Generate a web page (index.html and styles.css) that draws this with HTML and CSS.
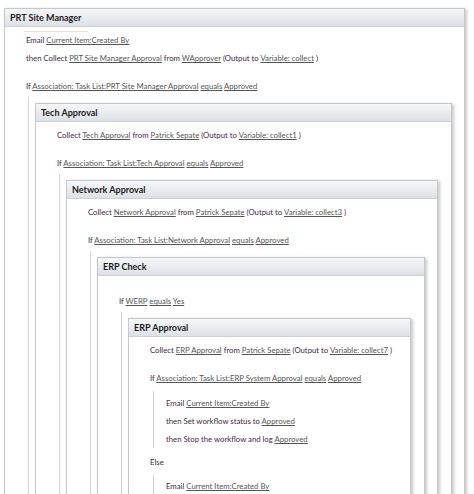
FILE: index.html
```html
<!DOCTYPE html>
<html>
<head>
<meta charset="utf-8">
<link rel="stylesheet" href="styles.css">
</head>
<body>
<div class="page">
  <div class="box">
    <div class="hdr">PRT Site Manager</div>
    <div class="body first">
      <div class="ln">Email <a>Current Item:Created By</a></div>
      <div class="ln">then Collect <a>PRT Site Manager Approval</a> from <a>WApprover</a> (Output to <a>Variable: collect</a> )</div>
      <div class="ln gap">If <a>Association: Task List:PRT Site Manager Approval</a> <a>equals</a> <a>Approved</a></div>
      <div class="branch">
        <div class="box">
          <div class="hdr">Tech Approval</div>
          <div class="body">
            <div class="ln">Collect <a>Tech Approval</a> from <a>Patrick Sepate</a> (Output to <a>Variable: collect1</a> )</div>
            <div class="ln gap">If <a>Association: Task List:Tech Approval</a> <a>equals</a> <a>Approved</a></div>
            <div class="branch">
              <div class="box">
                <div class="hdr">Network Approval</div>
                <div class="body">
                  <div class="ln">Collect <a>Network Approval</a> from <a>Patrick Sepate</a> (Output to <a>Variable: collect3</a> )</div>
                  <div class="ln gap">If <a>Association: Task List:Network Approval</a> <a>equals</a> <a>Approved</a></div>
                  <div class="branch">
                    <div class="box">
                      <div class="hdr">ERP Check</div>
                      <div class="body">
                        <div class="ln gap-lg">If <a>WERP</a> <a>equals</a> <a>Yes</a></div>
                        <div class="branch">
                          <div class="box">
                            <div class="hdr">ERP Approval</div>
                            <div class="body">
                              <div class="ln">Collect <a>ERP Approval</a> from <a>Patrick Sepate</a> (Output to <a>Variable: collect7</a> )</div>
                              <div class="ln gap">If <a>Association: Task List:ERP System Approval</a> <a>equals</a> <a>Approved</a></div>
                              <div class="sub">
                                <div class="ln">Email <a>Current Item:Created By</a></div>
                                <div class="ln">then Set workflow status to <a>Approved</a></div>
                                <div class="ln">then Stop the workflow and log <a>Approved</a></div>
                              </div>
                              <div class="ln else">Else</div>
                              <div class="sub sub-else">
                                <div class="ln">Email <a>Current Item:Created By</a></div>
                              </div>
                            </div>
                          </div>
                        </div>
                      </div>
                    </div>
                  </div>
                </div>
              </div>
            </div>
          </div>
        </div>
      </div>
    </div>
  </div>
</div>
</body>
</html>
```
FILE: styles.css
```css
html, body {
  margin: 0;
  padding: 0;
  background: #ffffff;
  overflow: hidden;
}
body {
  font-family: Lato, "Open Sans", sans-serif;
  font-size: 7.75px;
  color: #43263e;
}
.page {
  padding: 8px 0 0 4px;
  width: 461px;
}
.box {
  border: 1px solid #c3c7ce;
  background: #ffffff;
  box-shadow: 2px 1px 3px rgba(0, 0, 0, 0.22);
}
.hdr {
  height: 17px;
  line-height: 17px;
  padding-left: 5px;
  font-weight: bold;
  font-size: 9px;
  color: #1b1b1b;
  background: linear-gradient(#f6f7f9, #dde0e6);
  border-bottom: 1px solid #cdd0d6;
  white-space: nowrap;
}
.body {
  padding: 4px 12.5px 12px 21px;
}
.first::before {
  content: "";
  display: block;
  width: 64px;
  height: 1px;
  margin-left: -2px;
  margin-bottom: -1px;
  background: #f2dccb;
}
.ln {
  height: 18px;
  line-height: 18px;
  white-space: nowrap;
}
.gap {
  margin-top: 10px;
}
.gap-lg {
  margin-top: 12px;
}
.else {
  margin-top: 5px;
}
.branch {
  margin-left: 2px;
  margin-top: 2px;
  padding-top: 6px;
  padding-left: 6px;
  border-left: 1px solid #d4d4d4;
}
.sub {
  margin-left: 3px;
  margin-top: 4px;
  padding-top: 3px;
  padding-left: 12px;
  border-left: 1px solid #d4d4d4;
}
.sub-else {
  margin-top: 4px;
  padding-top: 2px;
  padding-bottom: 12px;
}
a {
  color: #555555;
  text-decoration: underline;
}
```
